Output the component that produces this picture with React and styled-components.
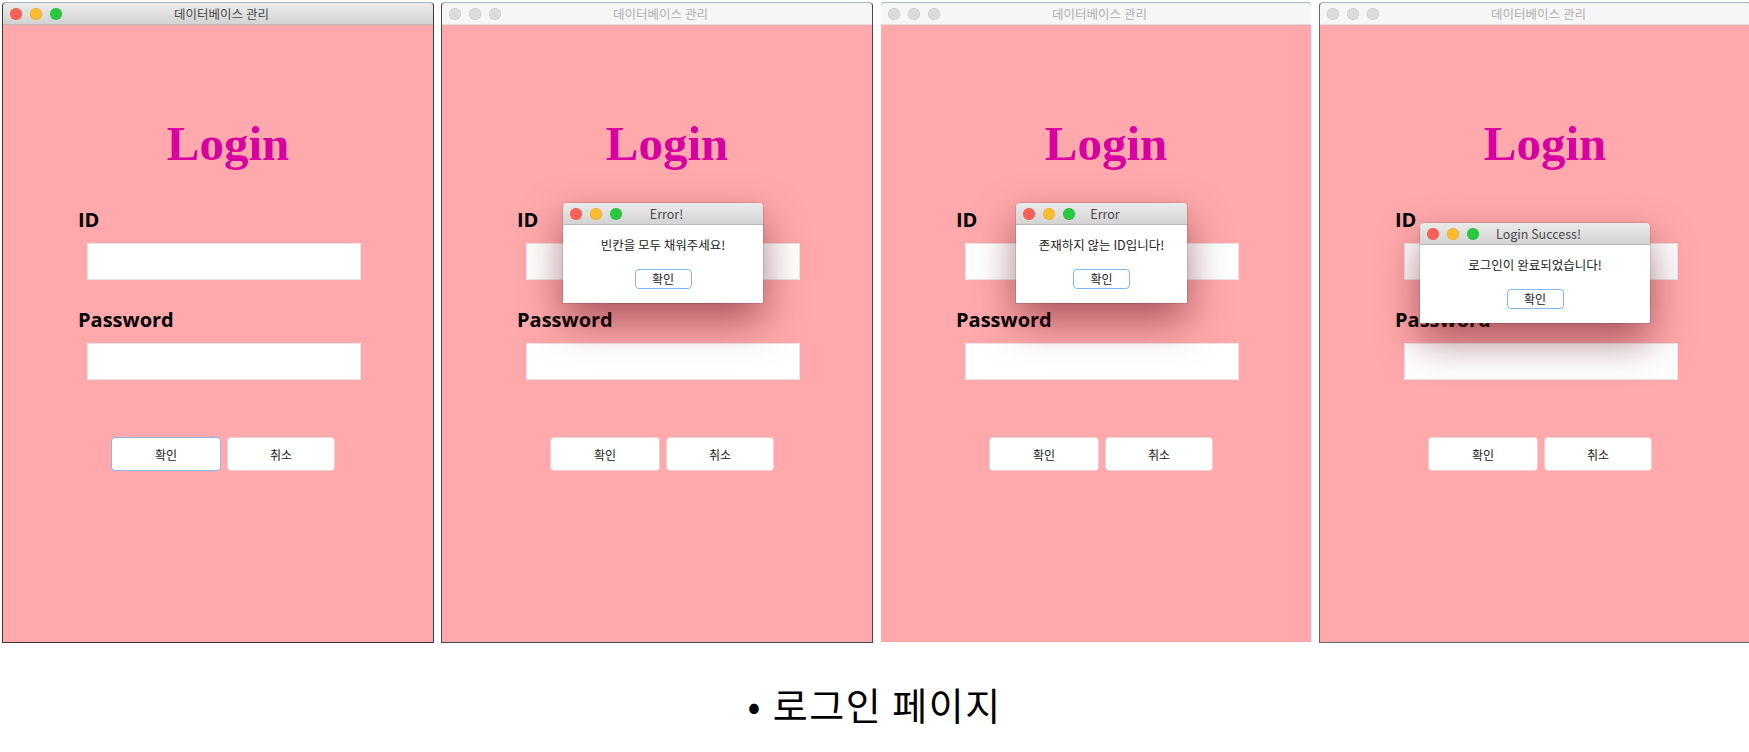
import styled, { createGlobalStyle } from 'styled-components';

const GlobalStyle = createGlobalStyle`
  html, body {
    margin: 0;
    padding: 0;
    background: #ffffff;
  }
  body {
    font-family: "Noto Sans CJK KR", "Noto Sans", sans-serif;
  }
`;

const Page = styled.div`
  width: 1749px;
  height: 752px;
  overflow: hidden;
  background: #ffffff;
`;

const Strip = styled.div`
  display: flex;
  gap: 7px;
  padding: 2px 0 0 2px;
`;

const Window = styled.div`
  position: relative;
  flex: 0 0 432px;
  height: 641px;
  box-sizing: border-box;
  display: flex;
  flex-direction: column;
  background: #ffa9ac;
  border: 1px solid ${(p) => p.$frame};
  border-top-color: #a9b8c8;
  border-radius: 4px 4px 0 0;
`;

const TitleBar = styled.div`
  display: grid;
  grid-template-columns: 1fr auto 1fr;
  align-items: center;
  height: ${(p) => p.$height}px;
  box-sizing: border-box;
  padding-left: 7px;
  background: ${(p) =>
    p.$active ? 'linear-gradient(#ebebeb, #d3d3d3)' : '#f6f6f6'};
  border-bottom: 1px solid ${(p) => (p.$active ? '#b8b8b8' : '#dedede')};
  border-radius: 4px 4px 0 0;
`;

const Lights = styled.div`
  display: flex;
  gap: 8px;
`;

const Light = styled.span`
  width: 12px;
  height: 12px;
  border-radius: 50%;
  background: ${(p) => p.$color};
  box-shadow: inset 0 0 0 0.5px rgba(0, 0, 0, 0.12);
`;

const TitleText = styled.span`
  font-size: ${(p) => p.$size}px;
  color: ${(p) => (p.$active ? '#4a4a4a' : '#b0b0b0')};
  white-space: nowrap;
`;

const Content = styled.div`
  display: flex;
  flex-direction: column;
`;

const Heading = styled.h1`
  margin: 91px 0 0;
  padding-left: 20px;
  text-align: center;
  font-family: "Liberation Serif", "Times New Roman", serif;
  font-weight: bold;
  font-size: 49px;
  line-height: 56px;
  color: #d800a0;
`;

const Form = styled.div`
  display: flex;
  flex-direction: column;
  align-items: flex-start;
  padding-left: 75px;
`;

const Label = styled.label`
  margin-top: ${(p) => p.$top}px;
  font-family: "Open Sans", "DejaVu Sans", sans-serif;
  font-weight: 700;
  font-size: 20px;
  line-height: 27px;
  color: #000;
`;

const Field = styled.input`
  margin: 10px 0 0 9px;
  width: 274px;
  height: 37px;
  box-sizing: border-box;
  border: 1px solid #ece4e4;
  background: #ffffff;
  outline: none;
`;

const ButtonRow = styled.div`
  display: flex;
  gap: 6px;
  margin: 57px 0 0 33px;
`;

const Button = styled.button`
  width: ${(p) => p.$w}px;
  height: 34px;
  box-sizing: border-box;
  border-radius: 4px;
  border: 1px solid ${(p) => (p.$focus ? '#8fb3ea' : '#ead2d2')};
  background: #ffffff;
  font-family: "Noto Sans CJK KR", sans-serif;
  font-size: 12px;
  color: #222;
  padding: 0;
`;

const Dialog = styled.div`
  position: absolute;
  left: ${(p) => p.$x}px;
  top: ${(p) => p.$y}px;
  width: ${(p) => p.$w}px;
  height: 100px;
  display: flex;
  flex-direction: column;
  background: #ffffff;
  border-radius: 5px 5px 0 0;
  box-shadow: 0 0 0 1px rgba(0, 0, 0, 0.1), 0 18px 40px rgba(90, 10, 20, 0.52);
`;

const DialogBody = styled.div`
  display: flex;
  flex-direction: column;
  align-items: center;
`;

const Message = styled.div`
  margin-top: 12px;
  font-size: 12.5px;
  line-height: 16px;
  color: #222;
`;

const DialogButton = styled.button`
  margin-top: 16px;
  width: 57px;
  height: 20px;
  box-sizing: border-box;
  border: 1.5px solid #80b8f4;
  border-radius: 4px;
  background: #fff;
  padding: 0;
  font-family: "Noto Sans CJK KR", sans-serif;
  font-size: 12px;
  line-height: 16px;
  color: #222;
`;

const Caption = styled.div`
  margin-top: 35px;
  text-align: center;
  font-size: 38px;
  line-height: 52px;
  letter-spacing: 1.5px;
  color: #000;
`;

const Bullet = styled.span`
  margin-right: 11px;
`;

const COLORS = ['#fd5f57', '#febc2e', '#28c840'];
const GREY = ['#dcdcdc', '#dcdcdc', '#dcdcdc'];

function TrafficLights({ active }) {
  return (
    <Lights>
      {(active ? COLORS : GREY).map((c, i) => (
        <Light key={i} $color={c} />
      ))}
    </Lights>
  );
}

function Popup({ x, y, w, title, message }) {
  return (
    <Dialog $x={x} $y={y} $w={w}>
      <TitleBar $active $height={22}>
        <TrafficLights active />
        <TitleText $active $size={12.5}>{title}</TitleText>
      </TitleBar>
      <DialogBody>
        <Message>{message}</Message>
        <DialogButton>확인</DialogButton>
      </DialogBody>
    </Dialog>
  );
}

const screens = [
  { active: true, frame: '#3d3a36', dialog: null },
  {
    active: false,
    frame: '#4a4744',
    dialog: { x: 121, y: 200, w: 200, title: 'Error!', message: '빈칸을 모두 채워주세요!' },
  },
  {
    active: false,
    frame: '#ffffff',
    dialog: { x: 135, y: 200, w: 171, title: 'Error', message: '존재하지 않는 ID입니다!' },
  },
  {
    active: false,
    frame: '#6b6660',
    dialog: { x: 100, y: 220, w: 230, title: 'Login Success!', message: '로그인이 완료되었습니다!' },
  },
];

export default function App() {
  return (
    <Page>
      <GlobalStyle />
      <Strip>
        {screens.map((s, i) => (
          <Window key={i} $frame={s.frame}>
            <TitleBar $active={s.active} $height={22}>
              <TrafficLights active={s.active} />
              <TitleText $active={s.active} $size={12.5}>데이터베이스 관리</TitleText>
            </TitleBar>
            <Content>
              <Heading>Login</Heading>
              <Form>
                <Label $top={34}>ID</Label>
                <Field type="text" readOnly />
                <Label $top={26}>Password</Label>
                <Field type="password" readOnly />
                <ButtonRow>
                  <Button $w={110} $focus={s.active}>확인</Button>
                  <Button $w={108}>취소</Button>
                </ButtonRow>
              </Form>
            </Content>
            {s.dialog && <Popup {...s.dialog} />}
          </Window>
        ))}
      </Strip>
      <Caption>
        <Bullet>•</Bullet>로그인 페이지
      </Caption>
    </Page>
  );
}
